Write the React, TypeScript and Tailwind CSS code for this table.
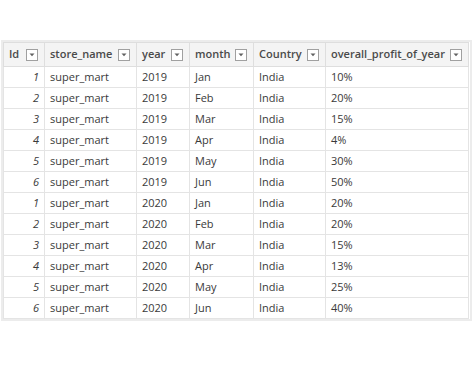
const cols = [
  { key: 'Id', w: 41 },
  { key: 'store_name', w: 92 },
  { key: 'year', w: 53 },
  { key: 'month', w: 64 },
  { key: 'Country', w: 72 },
  { key: 'overall_profit_of_year', w: 143 },
];

const months = ['Jan', 'Feb', 'Mar', 'Apr', 'May', 'Jun'];
const profits2019 = ['10%', '20%', '15%', '4%', '30%', '50%'];
const profits2020 = ['20%', '20%', '15%', '13%', '25%', '40%'];

const rows = [
  ...months.map((m, i) => ({ id: i + 1, year: '2019', month: m, profit: profits2019[i] })),
  ...months.map((m, i) => ({ id: i + 1, year: '2020', month: m, profit: profits2020[i] })),
];

function FilterBox() {
  return (
    <span className="flex h-[12px] w-[12px] shrink-0 items-center justify-center border border-[#a0a0a0] bg-white">
      <svg width="6" height="4" viewBox="0 0 6 4">
        <path d="M0.5 0.5h5L3 3.2z" fill="#606060" />
      </svg>
    </span>
  );
}

export default function App() {
  return (
    <div
      className="h-[366px] w-[474px] bg-white pt-[40px] pl-[1px] text-[11px] text-[#3a3a3a]"
      style={{ fontFamily: '"Open Sans", "Noto Sans", sans-serif' }}
    >
      <div className="w-[471px] border-[2px] border-[#ececec]">
        <table className="border-collapse table-fixed" style={{ width: 465 }}>
          <colgroup>
            {cols.map((c) => (
              <col key={c.key} style={{ width: c.w }} />
            ))}
          </colgroup>
          <thead>
            <tr className="h-[24px] bg-[#f4f4f4]">
              {cols.map((c) => (
                <th
                  key={c.key}
                  className="border border-[#dedede] pl-[5px] pr-[6px] text-left font-semibold text-[#4a4a4a]"
                >
                  <div className="flex items-center justify-between">
                    <span>{c.key}</span>
                    <FilterBox />
                  </div>
                </th>
              ))}
            </tr>
          </thead>
          <tbody>
            {rows.map((r, i) => (
              <tr key={i} className="h-[21px]">
                <td className="border border-[#e4e4e4] px-[5px] text-right italic">{r.id}</td>
                <td className="border border-[#e4e4e4] px-[5px]">super_mart</td>
                <td className="border border-[#e4e4e4] px-[5px]">{r.year}</td>
                <td className="border border-[#e4e4e4] px-[5px]">{r.month}</td>
                <td className="border border-[#e4e4e4] px-[5px]">India</td>
                <td className="border border-[#e4e4e4] px-[5px]">{r.profit}</td>
              </tr>
            ))}
          </tbody>
        </table>
      </div>
    </div>
  );
}
